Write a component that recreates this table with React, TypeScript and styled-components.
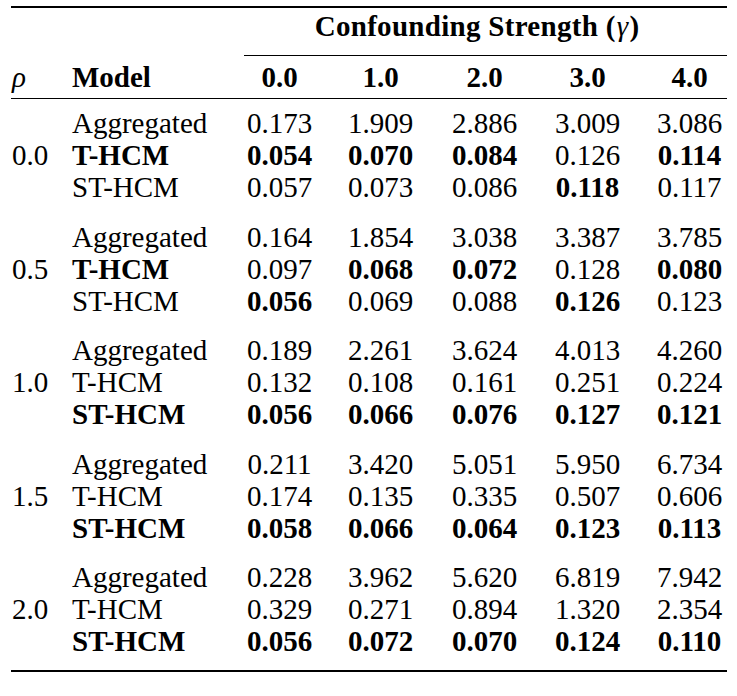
import React from 'react';
import styled, {createGlobalStyle} from "styled-components";

type RowType = {
    model: string;
    strong?: boolean;
    values: string[];
}

type GroupType = {
    rho: string;
    rows: RowType[];
}

// a trailing * marks the best value of a column
const groups: GroupType[] = [
    {
        rho: "0.0", rows: [
            {model: "Aggregated", values: ["0.173", "1.909", "2.886", "3.009", "3.086"]},
            {model: "T-HCM", strong: true, values: ["0.054*", "0.070*", "0.084*", "0.126", "0.114*"]},
            {model: "ST-HCM", values: ["0.057", "0.073", "0.086", "0.118*", "0.117"]},
        ]
    },
    {
        rho: "0.5", rows: [
            {model: "Aggregated", values: ["0.164", "1.854", "3.038", "3.387", "3.785"]},
            {model: "T-HCM", strong: true, values: ["0.097", "0.068*", "0.072*", "0.128", "0.080*"]},
            {model: "ST-HCM", values: ["0.056*", "0.069", "0.088", "0.126*", "0.123"]},
        ]
    },
    {
        rho: "1.0", rows: [
            {model: "Aggregated", values: ["0.189", "2.261", "3.624", "4.013", "4.260"]},
            {model: "T-HCM", values: ["0.132", "0.108", "0.161", "0.251", "0.224"]},
            {model: "ST-HCM", strong: true, values: ["0.056*", "0.066*", "0.076*", "0.127*", "0.121*"]},
        ]
    },
    {
        rho: "1.5", rows: [
            {model: "Aggregated", values: ["0.211", "3.420", "5.051", "5.950", "6.734"]},
            {model: "T-HCM", values: ["0.174", "0.135", "0.335", "0.507", "0.606"]},
            {model: "ST-HCM", strong: true, values: ["0.058*", "0.066*", "0.064*", "0.123*", "0.113*"]},
        ]
    },
    {
        rho: "2.0", rows: [
            {model: "Aggregated", values: ["0.228", "3.962", "5.620", "6.819", "7.942"]},
            {model: "T-HCM", values: ["0.329", "0.271", "0.894", "1.320", "2.354"]},
            {model: "ST-HCM", strong: true, values: ["0.056*", "0.072*", "0.070*", "0.124*", "0.110*"]},
        ]
    },
];

const strengths = ["0.0", "1.0", "2.0", "3.0", "4.0"];

export default function App() {
    return (
        <>
            <GlobalStyle/>
            <StyledTable>
                <Rule $thick/>
                <HeadRow>
                    <SpanTitle>
                        Confounding Strength (<Gamma>γ</Gamma>)
                    </SpanTitle>
                </HeadRow>
                <HeadRow>
                    <PartialRule/>
                </HeadRow>
                <HeadRow $top={5}>
                    <RhoHead>ρ</RhoHead>
                    <Model $row={1} $strong>Model</Model>
                    {strengths.map((s, k) => <Value key={s} $row={1} $col={k + 3} $strong>{s}</Value>)}
                </HeadRow>
                <Rule $gap={5}/>
                {groups.map((g, i) => (
                    <Group key={g.rho} $top={i === 0 ? 8 : 17.5}>
                        <Rho>{g.rho}</Rho>
                        {g.rows.map((r, j) => (
                            <React.Fragment key={r.model}>
                                <Model $row={j + 1} $strong={r.strong}>{r.model}</Model>
                                {r.values.map((v, k) => (
                                    <Value key={k} $row={j + 1} $col={k + 3} $strong={v.endsWith("*")}>
                                        {v.replace("*", "")}
                                    </Value>
                                ))}
                            </React.Fragment>
                        ))}
                    </Group>
                ))}
                <Rule $thick $gap={12.5}/>
            </StyledTable>
        </>
    );
}

const GlobalStyle = createGlobalStyle`
    body {
        margin: 0;
        background: #fff;
        color: #000;
    }
`

const columns = "61px 175px 65px 101px 104px 103px 102px 5px";

const StyledTable = styled.div`
    display: flex;
    flex-direction: column;
    width: 716px;
    margin-left: 11px;
    padding-top: 6px;
    font-family: "Liberation Serif", "Times New Roman", serif;
    font-size: 29px;
    line-height: 32px;
`
const Rule = styled.div<{ $thick?: boolean; $gap?: number }>`
    height: ${p => p.$thick ? 2 : 1}px;
    margin-top: ${p => p.$gap ?? 0}px;
    background: #000;
`
const HeadRow = styled.div<{ $top?: number }>`
    display: grid;
    grid-template-columns: ${columns};
    margin-top: ${p => p.$top ?? 2}px;
`
const SpanTitle = styled.div`
    grid-column: 3 / -1;
    padding-right: 20px;
    text-align: center;
    font-weight: bold;
    letter-spacing: 0.3px;
`
const Gamma = styled.span`
    font-style: italic;
    font-weight: normal;
    margin: 0 1px;
`
const PartialRule = styled.div`
    grid-column: 3 / -1;
    height: 1px;
    margin: 11px 0 0 -3px;
    background: #000;
`
const Group = styled.div<{ $top: number }>`
    display: grid;
    grid-template-columns: ${columns};
    grid-template-rows: repeat(3, 32px);
    margin-top: ${p => p.$top}px;
`
const Rho = styled.div`
    grid-column: 1;
    grid-row: 2;
    padding-left: 1px;
`
const RhoHead = styled.div`
    grid-column: 1;
    grid-row: 1;
    padding-left: 1px;
    font-style: italic;
`
const Model = styled.div<{ $row: number; $strong?: boolean }>`
    grid-column: 2;
    grid-row: ${p => p.$row};
    font-weight: ${p => p.$strong ? "bold" : "normal"};
`
const Value = styled.div<{ $row: number; $col: number; $strong?: boolean }>`
    grid-column: ${p => p.$col};
    grid-row: ${p => p.$row};
    width: 65px;
    justify-self: end;
    text-align: center;
    font-weight: ${p => p.$strong ? "bold" : "normal"};
`
